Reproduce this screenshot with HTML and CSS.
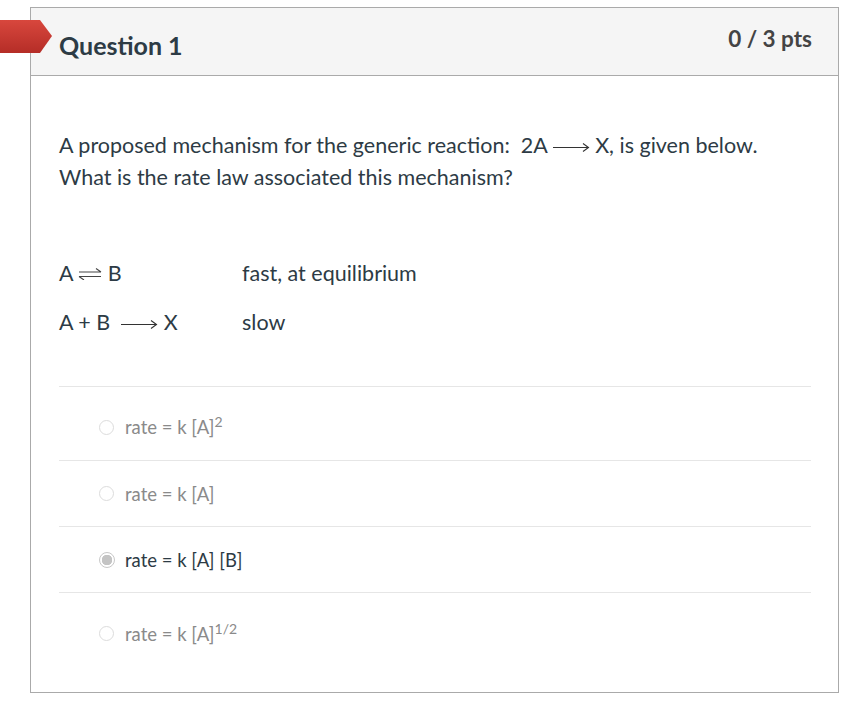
FILE: index.html
```html
<!DOCTYPE html>
<html>
<head>
<meta charset="utf-8">
<link rel="stylesheet" href="styles.css">
</head>
<body>
<div class="card">
  <div class="flag"></div>
  <div class="header">
    <h2 class="title">Question 1</h2>
    <div class="pts">0 / 3 pts</div>
  </div>
  <div class="body">
    <p class="question">A proposed mechanism for the generic reaction:&nbsp; 2A <svg class="arrow" width="37" height="10" viewBox="0 0 37 10"><path d="M0 5.5H35M30 1.5L35.5 5.5L30 9.5" fill="none" stroke="#333" stroke-width="1.1"/></svg> X, is given below.<br>What is the rate law associated this mechanism?</p>
    <div class="mech">
      <div class="eq">A <svg class="equil" width="24" height="12" viewBox="0 0 24 12"><path d="M1 4H23M23 4L18 0.5M1 8.5H23M1 8.5L6 12" fill="none" stroke="#444" stroke-width="1.1"/></svg> B</div>
      <div class="cond">fast, at equilibrium</div>
      <div class="eq">A + B&nbsp; <svg class="arrow" width="37" height="10" viewBox="0 0 37 10"><path d="M0 5.5H35M30 1.5L35.5 5.5L30 9.5" fill="none" stroke="#333" stroke-width="1.1"/></svg> X</div>
      <div class="cond">slow</div>
    </div>
    <div class="answers">
      <div class="answer sup-row"><span class="radio"></span><span class="label">rate = k [A]<sup>2</sup></span></div>
      <div class="answer"><span class="radio"></span><span class="label">rate = k [A]</span></div>
      <div class="answer selected"><span class="radio checked"></span><span class="label">rate = k [A] [B]</span></div>
      <div class="answer sup-row last"><span class="radio"></span><span class="label">rate = k [A]<sup>1/2</sup></span></div>
    </div>
  </div>
</div>
</body>
</html>
```
FILE: styles.css
```css
html, body {
  margin: 0;
  padding: 0;
  background: #fff;
}
body {
  font-family: Lato, "Open Sans", sans-serif;
  color: #2d3b45;
}
.card {
  position: relative;
  margin: 7px 0 0 30px;
  width: 807px;
  height: 684px;
  border: 1px solid #aaaaaa;
  box-sizing: content-box;
}
.flag {
  position: absolute;
  left: -31px;
  top: 12px;
  width: 52px;
  height: 33px;
  background: linear-gradient(#d8473d, #b52d27);
  clip-path: polygon(0 0, 40px 0, 52px 16px, 40px 33px, 0 33px);
}
.header {
  display: flex;
  justify-content: space-between;
  align-items: flex-start;
  height: 67px;
  background: #f5f5f5;
  border-bottom: 1px solid #aaaaaa;
  padding: 0 26px 0 28px;
}
.title {
  margin: 0;
  padding-top: 23px;
  font-size: 25px;
  font-weight: 700;
  line-height: 28px;
  color: #2d3b45;
}
.pts {
  padding-top: 17px;
  font-size: 22.5px;
  font-weight: 700;
  line-height: 28px;
  color: #444;
}
.body {
  padding: 0 27px 0 28px;
}
.question {
  margin: 0;
  padding-top: 53px;
  font-size: 21.5px;
  line-height: 32px;
}
.arrow {
  vertical-align: 1px;
}
.equil {
  vertical-align: 1px;
}
.mech {
  display: grid;
  grid-template-columns: 183px 1fr;
  row-gap: 17px;
  margin-top: 64px;
  font-size: 21.5px;
  line-height: 32px;
}
.answers {
  margin-top: 48px;
  border-top: 1px solid #e6e6e6;
}
.answer {
  display: flex;
  align-items: center;
  box-sizing: border-box;
  height: 66px;
  border-bottom: 1px solid #e6e6e6;
  padding-left: 40px;
  font-size: 18.5px;
  color: #8a8a8a;
}
.answer.sup-row {
  height: 74px;
  padding-top: 7px;
}
.answer.last {
  border-bottom: none;
}
.answer.selected {
  color: #2d3b45;
}
.radio {
  flex: none;
  width: 15px;
  height: 15px;
  border: 1px solid #dcdcdc;
  border-radius: 50%;
  box-sizing: border-box;
  margin-right: 11px;
  background: #fff;
}
.radio.checked {
  width: 16px;
  height: 16px;
  margin-left: -0.5px;
  margin-right: 10.5px;
  border: 1px solid #c8c8c8;
  background: radial-gradient(circle, #c4c4c4 0 5px, #fff 5.5px);
}
sup {
  font-size: 14px;
  line-height: 0;
}
```
